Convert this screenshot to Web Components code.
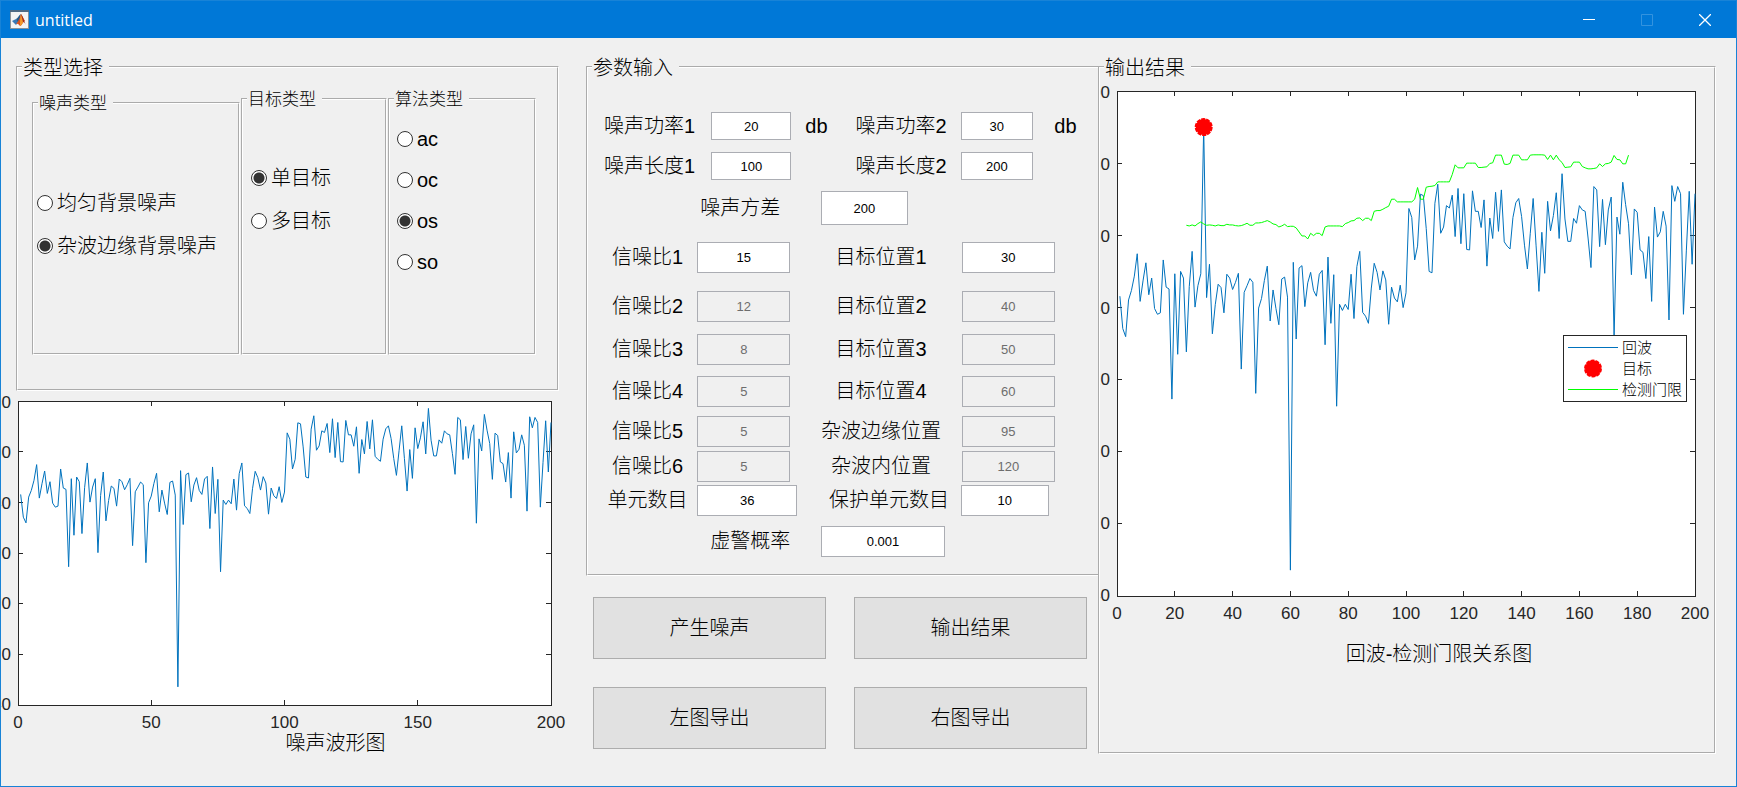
<!DOCTYPE html>
<html lang="zh-CN">
<head>
<meta charset="utf-8">
<title>untitled</title>
<style>
    html, body {
        margin: 0;
        height: 100%;
    }

    body {
        font: 20px/24px "Liberation Sans", "Noto Sans CJK SC", sans-serif;
        font-weight: 300;
        color: #000;
    }

    main {
        flex: 1;
        display: grid;
        grid-template-columns: 585fr 512fr 618fr;
        padding: 16px 20px 0 0;
    }

    .column {
        display: flex;
        flex-direction: column;
        min-width: 0;
    }

    .types {
        margin: 0 27px 0 15px;
    }

    .type-groups {
        display: grid;
        grid-template-columns: 208fr 146fr 148fr;
        gap: 1px;
        align-items: end;
        padding: 8px 21px 34px 14px;
    }

    .type-groups group-panel {
        height: 267px;
        font-size: 17px;
        line-height: 20px;
    }

    .type-groups .noise {
        height: 263px;
    }

    .noise choice-group {
        padding: 67px 0 0 3px;
    }

    .target choice-group {
        padding: 46px 0 0 8px;
    }

    .algorithm choice-group {
        padding: 8px 0 0 7px;
        --option-height: 41px;
    }

    .noise-plot {
        flex: 1;
        margin: 10px 35px 33px 0;
        --caption-gap: 0px;
        --caption-indent: 102px;
    }

    /* shares its right edge with the result panel */
    .params {
        margin-right: -2px;
    }

    .form {
        display: grid;
        grid-template-rows: 40px 40px 44px 54px 44px 42px 42px 38px 32px 36px 46px;
        padding: 26px 0 10px;
    }

    .actions {
        display: grid;
        grid-template-columns: 1fr 1fr;
        gap: 28px;
        padding: 21px 11px 0 7px;
    }

    .result {
        flex: 1;
        margin-bottom: 32px;
    }

    .result-plot {
        flex: 1;
        margin: 11px 19px 88px 0;
        --caption-gap: 20px;
        --caption-indent: 66px;
    }
</style>
</head>
<body>
<figure-window caption="untitled">
    <main>
        <div class="column">
            <group-panel class="types" caption="类型选择">
                <div class="type-groups">
                    <group-panel class="noise" caption="噪声类型">
                        <choice-group options="均匀背景噪声,杂波边缘背景噪声" selected="1"></choice-group>
                    </group-panel>
                    <group-panel class="target" caption="目标类型">
                        <choice-group options="单目标,多目标" selected="0"></choice-group>
                    </group-panel>
                    <group-panel class="algorithm" caption="算法类型">
                        <choice-group options="ac,oc,os,so" selected="2"></choice-group>
                    </group-panel>
                </div>
            </group-panel>
            <signal-plot class="noise-plot" kind="noise" caption="噪声波形图"></signal-plot>
        </div>

        <div class="column">
            <group-panel class="params" caption="参数输入">
                <div class="form">
                    <param-row kind="power">
                        <param-field label="噪声功率1" value="20" unit="db"></param-field>
                        <param-field label="噪声功率2" value="30" unit="db"></param-field>
                    </param-row>
                    <param-row kind="power">
                        <param-field label="噪声长度1" value="100"></param-field>
                        <param-field label="噪声长度2" value="200"></param-field>
                    </param-row>
                    <param-row kind="variance">
                        <param-field label="噪声方差" value="200"></param-field>
                    </param-row>
                    <param-row>
                        <param-field label="信噪比1" value="15"></param-field>
                        <param-field label="目标位置1" value="30"></param-field>
                    </param-row>
                    <param-row>
                        <param-field label="信噪比2" value="12" disabled></param-field>
                        <param-field label="目标位置2" value="40" disabled></param-field>
                    </param-row>
                    <param-row>
                        <param-field label="信噪比3" value="8" disabled></param-field>
                        <param-field label="目标位置3" value="50" disabled></param-field>
                    </param-row>
                    <param-row>
                        <param-field label="信噪比4" value="5" disabled></param-field>
                        <param-field label="目标位置4" value="60" disabled></param-field>
                    </param-row>
                    <param-row>
                        <param-field label="信噪比5" value="5" disabled></param-field>
                        <param-field label="杂波边缘位置" value="95" disabled></param-field>
                    </param-row>
                    <param-row>
                        <param-field label="信噪比6" value="5" disabled></param-field>
                        <param-field label="杂波内位置" value="120" disabled></param-field>
                    </param-row>
                    <param-row kind="count">
                        <param-field label="单元数目" value="36"></param-field>
                        <param-field label="保护单元数目" value="10"></param-field>
                    </param-row>
                    <param-row kind="alarm">
                        <param-field label="虚警概率" value="0.001"></param-field>
                    </param-row>
                </div>
            </group-panel>
            <div class="actions">
                <push-button>产生噪声</push-button>
                <push-button>输出结果</push-button>
                <push-button>左图导出</push-button>
                <push-button>右图导出</push-button>
            </div>
        </div>

        <div class="column">
            <group-panel class="result" caption="输出结果">
                <signal-plot class="result-plot" kind="result" caption="回波-检测门限关系图"></signal-plot>
            </group-panel>
        </div>
    </main>
</figure-window>

<script>
(() => {
    // Raw noise samples, one per range cell, 1..200
    const NOISE = [
        317, 385, 402, 325, 305, 275, 228, 328, 285, 247, 314, 279, 343, 355, 352, 241, 298, 302, 533, 270,
        439, 265, 279, 434, 297, 223, 340, 295, 270, 491, 320, 250, 396, 335, 292, 299, 352, 271, 279, 303,
        288, 269, 470, 309, 295, 280, 288, 521, 342, 322, 284, 254, 369, 304, 343, 377, 281, 277, 319, 892,
        246, 407, 258, 253, 339, 289, 267, 305, 317, 271, 263, 419, 235, 374, 272, 548, 334, 347, 334, 345,
        271, 364, 255, 223, 351, 359, 374, 300, 248, 267, 304, 264, 283, 376, 298, 321, 329, 294, 341, 310,
        133, 152, 241, 212, 103, 106, 175, 265, 268, 122, 82, 185, 172, 127, 132, 105, 192, 91, 207, 102,
        219, 220, 96, 139, 139, 173, 115, 254, 153, 196, 99, 181, 94, 203, 212, 218, 152, 121, 112, 150,
        210, 260, 185, 112, 210, 307, 183, 269, 118, 180, 148, 100, 196, 60, 155, 202, 202, 154, 164, 127,
        136, 139, 195, 257, 87, 94, 213, 114, 209, 136, 109, 403, 151, 187, 78, 125, 165, 272, 134, 141,
        220, 225, 280, 192, 328, 130, 193, 182, 139, 170, 367, 85, 118, 87, 102, 355, 222, 97, 250, 102
    ].map(raw => 85 - raw / 7.57);

    // Raw detection threshold, starting at cell 24
    const THRESHOLD_START = 24;
    const THRESHOLD = [
        530, 532, 529, 532, 525, 520, 526, 530, 529, 530, 532, 529, 531, 531, 527, 529, 529, 531, 532, 531,
        528, 524, 530, 530, 523, 523, 522, 519, 516, 520, 526, 528, 535, 532, 527, 534, 533, 533, 538, 550,
        562, 562, 571, 554, 561, 554, 554, 561, 535, 532, 532, 532, 532, 532, 534, 525, 522, 517, 516, 509,
        508, 516, 509, 509, 516, 488, 486, 486, 482, 477, 473, 452, 452, 460, 460, 460, 460, 460, 460, 452,
        417, 452, 452, 416, 414, 413, 411, 400, 400, 400, 400, 400, 378, 349, 358, 358, 358, 344, 344, 344,
        344, 357, 357, 356, 355, 345, 343, 320, 320, 320, 347, 348, 345, 320, 320, 320, 334, 334, 334, 320,
        319, 319, 319, 319, 320, 333, 320, 334, 320, 334, 342, 357, 356, 355, 341, 341, 341, 354, 358, 361,
        361, 360, 358, 346, 354, 346, 345, 341, 321, 333, 334, 346, 346, 320
    ].map(raw => 111.85 - raw / 10.8);

    const TARGET = { cell: 30, level: 90 };
    const ECHO = NOISE.map((v, i) => i + 1 === TARGET.cell ? TARGET.level : v);

    const PLOTS = {
        noise: {
            x: [0, 50, 100, 150, 200],
            y: [80, 60, 40, 20, 0, -20, -40],
            lines: [{ color: '#0072bd', start: 1, values: NOISE }]
        },
        result: {
            x: [0, 20, 40, 60, 80, 100, 120, 140, 160, 180, 200],
            y: [100, 80, 60, 40, 20, 0, -20, -40],
            lines: [
                { color: '#0072bd', start: 1, values: ECHO },
                { color: '#00ff00', start: THRESHOLD_START, values: THRESHOLD }
            ],
            marker: TARGET,
            legend: true
        }
    };

    const MARKER = `
        <circle r="8" fill="#f00"/>
        <circle r="8" fill="none" stroke="#f00" stroke-width="2" stroke-dasharray="4 1"/>`;

    class BaseElement extends HTMLElement {
        connectedCallback() {
            if (this.shadowRoot) return;
            this.attachShadow({ mode: 'open' }).innerHTML = this.render();
        }
    }

    class FigureWindow extends BaseElement {
        render() {
            return `
                <style>
                :host {
                    display: flex;
                    flex-direction: column;
                    box-sizing: border-box;
                    min-height: 100%;
                    border: 1px solid #1883d7;
                    background: #f0f0f0;
                    overflow: hidden;
                }

                header {
                    display: flex;
                    align-items: center;
                    height: 37px;
                    padding: 0 2px 0 9px;
                    background: #0078d7;
                    color: #fff;
                    font: 16px/20px "Open Sans", "Noto Sans", sans-serif;
                }

                h1 {
                    flex: 1;
                    margin: 0 0 0 6px;
                    font: inherit;
                }

                button {
                    width: 58px;
                    height: 37px;
                    padding: 0;
                    border: 0;
                    background: none;
                    color: #fff;
                }

                button:disabled {
                    color: #3393df;
                }

                svg {
                    display: block;
                    margin: auto;
                }

                header > svg {
                    margin: 0;
                }
                </style>
                <header>
                    <svg width="19" height="19" viewBox="0 0 19 19">
                        <rect x=".5" y=".5" width="18" height="18" fill="#f4f4f4" stroke="#8a9299"/>
                        <path d="M0 1h19" stroke="#4d6a85" stroke-width="2"/>
                        <path d="M2 11l4-2 3 2-3 4z" fill="#3a78b5"/>
                        <path d="M6 9c2-1 3-4 5-5l-1 6-2 2z" fill="#245a8c"/>
                        <path d="M11 4c-1 3-2 7-5 10 2-1 3 1 4 2 2 0 3-5 5-5z" fill="#d9531e"/>
                        <path d="M11 4c-1 4-1 7-1 12 2-1 3-4 4-5z" fill="#f39a2b"/>
                        <path d="M11 4c2 2 3 7 5 11-1-2-2-3-3-3z" fill="#a42a1c"/>
                    </svg>
                    <h1>${this.getAttribute('caption')}</h1>
                    <button type="button" aria-label="minimize">
                        <svg width="12" height="12"><path d="M0 5.5h12" stroke="currentColor"/></svg>
                    </button>
                    <button type="button" aria-label="maximize" disabled>
                        <svg width="12" height="12"><path d="M.5.5h11v11h-11z" fill="none" stroke="currentColor"/></svg>
                    </button>
                    <button type="button" aria-label="close">
                        <svg width="12" height="12"><path d="M0 0l12 12M12 0l-12 12" stroke="currentColor" stroke-width="1.3"/></svg>
                    </button>
                </header>
                <slot></slot>
            `;
        }
    }

    class GroupPanel extends BaseElement {
        render() {
            return `
                <style>
                :host {
                    display: flex;
                    min-width: 0;
                }

                fieldset {
                    flex: 1;
                    display: flex;
                    flex-direction: column;
                    min-width: 0;
                    margin: 0;
                    padding: 0;
                    border: 2px groove #fff;
                    overflow-x: clip;
                }

                legend {
                    margin-left: 4px;
                    padding: 2px 6px 0 1px;
                }
                </style>
                <fieldset>
                    <legend>${this.getAttribute('caption')}</legend>
                    <slot></slot>
                </fieldset>
            `;
        }
    }

    class ChoiceGroup extends BaseElement {
        render() {
            const selected = Number(this.getAttribute('selected'));
            const options = this.getAttribute('options').split(',').map((text, i) => `
                <label><input type="radio" name="choice" ${i === selected ? 'checked' : ''}>${text}</label>
            `).join('');
            return `
                <style>
                :host {
                    display: block;
                    font-size: 20px;
                    line-height: 24px;
                    white-space: nowrap;
                }

                label {
                    display: flex;
                    align-items: center;
                    gap: 4px;
                    height: var(--option-height, 43px);
                }

                input {
                    appearance: none;
                    width: 16px;
                    height: 16px;
                    margin: 0;
                    border: 1px solid #333;
                    border-radius: 50%;
                    background: #fff;
                }

                input:checked {
                    background: radial-gradient(circle, #333 5px, #fff 6px);
                }
                </style>
                ${options}
            `;
        }
    }

    class ParamRow extends BaseElement {
        render() {
            return `
                <style>
                :host {
                    display: grid;
                    align-items: center;
                    grid-template-columns: 99fr 93fr 10fr 161fr 93fr 43fr;
                    padding-left: 10px;
                    --box-height: 31px;
                }

                :host([kind="power"]) {
                    grid-template-columns: 123fr 80fr 50fr 119fr 72fr 65fr;
                    padding-left: 0;
                    --box-height: 28px;
                }

                :host([kind="count"]) {
                    grid-template-columns: 99fr 100fr 20fr 143fr 88fr 49fr;
                }

                :host([kind="variance"]) {
                    grid-template-columns: 162fr 86fr 190fr;
                    padding-left: 71px;
                    --box-height: 34px;
                }

                :host([kind="alarm"]) {
                    grid-template-columns: 142fr 123fr 153fr;
                    padding-left: 91px;
                }
                </style>
                <slot></slot>
            `;
        }
    }

    // Renders as three cells of the surrounding row: label, box, unit
    class ParamField extends BaseElement {
        render() {
            return `
                <style>
                :host {
                    display: contents;
                }

                label, span {
                    text-align: center;
                    white-space: nowrap;
                }

                input {
                    box-sizing: border-box;
                    min-width: 0;
                    width: 100%;
                    height: var(--box-height);
                    padding: 0;
                    border: 1px solid #abadb3;
                    background: #fff;
                    color: #000;
                    font: 13px/16px "Liberation Sans", sans-serif;
                    text-align: center;
                }

                input:disabled {
                    background: #f0f0f0;
                    color: #6d6d6d;
                }
                </style>
                <label for="box">${this.getAttribute('label')}</label>
                <input id="box" type="text" value="${this.getAttribute('value')}" ${this.hasAttribute('disabled') ? 'disabled' : ''}>
                <span>${this.getAttribute('unit') || ''}</span>
            `;
        }
    }

    class PushButton extends BaseElement {
        render() {
            return `
                <style>
                :host {
                    display: block;
                }

                button {
                    display: block;
                    width: 100%;
                    height: 62px;
                    border: 1px solid #adadad;
                    background: #e1e1e1;
                    color: #000;
                    font: inherit;
                }

                button:hover {
                    border-color: #0078d7;
                    background: #e5f1fb;
                }
                </style>
                <button type="button"><slot></slot></button>
            `;
        }
    }

    class SignalPlot extends BaseElement {
        render() {
            const plot = PLOTS[this.getAttribute('kind')];
            const top = plot.y[0];
            const xMax = plot.x[plot.x.length - 1];
            const range = top - plot.y[plot.y.length - 1];
            const labels = list => list.map(v => `<span>${v}</span>`).join('');

            const lines = plot.lines.map(({ color, start, values }) => {
                const points = values.map((v, i) => `${start + i},${(top - v).toFixed(2)}`).join(' ');
                return `<polyline points="${points}" stroke="${color}"/>`;
            }).join('');

            const xTicks = plot.x.map(v => {
                const x = v / xMax * 100;
                return `<svg x="${x}%"><path d="M0 0v5"/></svg><svg x="${x}%" y="100%"><path d="M0 0v-5"/></svg>`;
            }).join('');
            const yTicks = plot.y.map(v => {
                const y = (top - v) / range * 100;
                return `<svg y="${y}%"><path d="M0 0h5"/></svg><svg x="100%" y="${y}%"><path d="M0 0h-5"/></svg>`;
            }).join('');

            const marker = plot.marker
                ? `<svg x="${plot.marker.cell / xMax * 100}%" y="${(top - plot.marker.level) / range * 100}%">${MARKER}</svg>`
                : '';

            const legend = plot.legend ? `
                <div class="legend">
                    <svg width="50" height="21"><path d="M0 10.5h50" stroke="#0072bd"/></svg><span>回波</span>
                    <svg width="50" height="21"><g transform="translate(25 10.5)">${MARKER}</g></svg><span>目标</span>
                    <svg width="50" height="21"><path d="M0 10.5h50" stroke="#00ff00"/></svg><span>检测门限</span>
                </div>` : '';

            return `
                <style>
                :host {
                    display: grid;
                    grid-template: minmax(200px, 1fr) auto auto / 10px minmax(0, 1fr);
                    column-gap: 7px;
                }

                .x, .y {
                    display: flex;
                    justify-content: space-between;
                    color: #262626;
                    font-size: 17px;
                    line-height: 20px;
                }

                .y {
                    flex-direction: column;
                    margin-top: 2px;
                }

                .y span {
                    display: flex;
                    justify-content: flex-end;
                    align-items: center;
                    height: 0;
                }

                .x {
                    grid-column: 2;
                    padding-top: 8px;
                }

                .x span {
                    display: flex;
                    justify-content: center;
                    width: 0;
                }

                .area {
                    position: relative;
                    background: #fff;
                }

                svg {
                    overflow: visible;
                }

                .chart {
                    position: absolute;
                    width: 100%;
                    height: 100%;
                }

                .axes {
                    fill: none;
                    stroke: #262626;
                    shape-rendering: crispEdges;
                }

                polyline {
                    fill: none;
                    vector-effect: non-scaling-stroke;
                    stroke-linejoin: round;
                }

                .legend {
                    position: absolute;
                    right: 8px;
                    top: 244px;
                    display: grid;
                    grid-template-columns: 50px auto;
                    column-gap: 4px;
                    padding: 1px 4px;
                    border: 1px solid #262626;
                    background: #fff;
                    font-size: 15px;
                    line-height: 21px;
                }

                .legend svg {
                    display: block;
                }

                .caption {
                    grid-column: 2;
                    padding: var(--caption-gap) 0 0 var(--caption-indent);
                    line-height: 20px;
                    text-align: center;
                }
                </style>
                <div class="y">${labels(plot.y)}</div>
                <div class="area">
                    <svg class="chart">
                        <g class="axes"><rect width="100%" height="100%"/>${xTicks}${yTicks}</g>
                        <svg width="100%" height="100%" viewBox="0 0 ${xMax} ${range}" preserveAspectRatio="none">${lines}</svg>
                        ${marker}
                    </svg>
                    ${legend}
                </div>
                <div class="x">${labels(plot.x)}</div>
                <div class="caption">${this.getAttribute('caption')}</div>
            `;
        }
    }

    customElements.define('figure-window', FigureWindow);
    customElements.define('group-panel', GroupPanel);
    customElements.define('choice-group', ChoiceGroup);
    customElements.define('param-row', ParamRow);
    customElements.define('param-field', ParamField);
    customElements.define('push-button', PushButton);
    customElements.define('signal-plot', SignalPlot);
})();
</script>
</body>
</html>
